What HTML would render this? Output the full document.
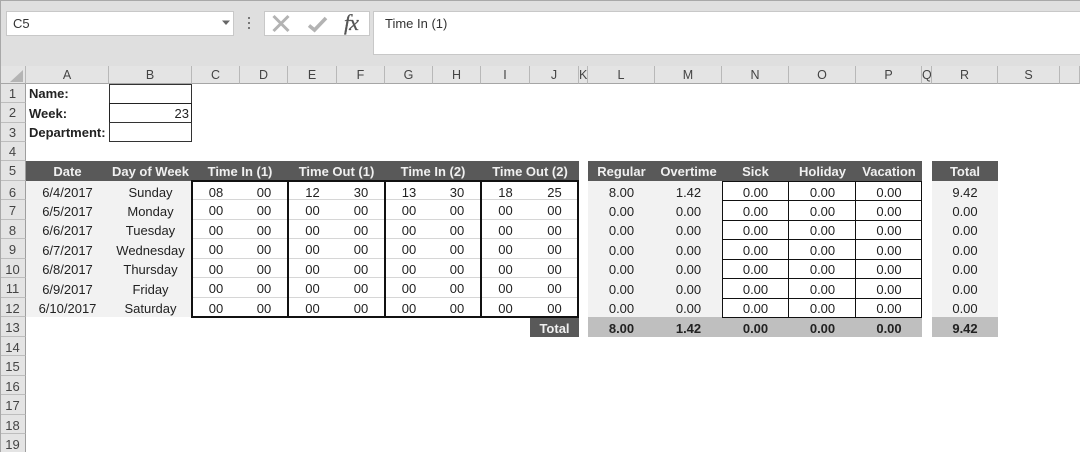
<!DOCTYPE html>
<html><head><meta charset="utf-8"><style>
html,body{margin:0;padding:0;width:1080px;height:452px;overflow:hidden;background:#fff}
body{position:relative;font:13px "Liberation Sans",sans-serif;color:#222;filter:blur(.3px)}
#bar{position:absolute;left:0;top:0;width:1080px;height:66px;background:#dfdfdf;border-top:1px solid #a8a8a8;box-sizing:border-box}
.w{position:absolute;background:#fff;border:1px solid #c8c8c8;box-sizing:border-box}
table{position:absolute;left:0;top:66px;width:1080px;border-collapse:separate;border-spacing:0;table-layout:fixed}
td,th{padding:0;overflow:hidden;white-space:nowrap;text-align:center;font-weight:normal;box-sizing:border-box}
tr:nth-child(n+7) td,tr:nth-child(n+7) th{padding-top:2px}
tr:nth-child(7) td,tr:nth-child(7) th{padding-top:4px;line-height:13px}
tr.c th,tr.c td{background:#e4e4e4;color:#444;font-size:12.5px;border-right:1px solid #b8b8b8;border-bottom:1px solid #a6a6a6}
th.r{background:#e4e4e4;color:#444;border-right:1px solid #9e9e9e;border-bottom:1px solid #bdbdbd}
.l{background:#f2f2f2}
.d{background:#595959;color:#f0f0f0;font-weight:bold}
.g{background:#bfbfbf;font-weight:bold;color:#222}
.t{border-bottom:1px solid #d6d6d6}
.b{font-weight:bold;text-align:left;padding-left:3px;color:#222}
.o{position:absolute;box-sizing:border-box;background:transparent}
.k{border:2px solid #111}
.h{left:722px;width:200px;height:1px;background:#111}
.v{top:181px;height:137px;width:1px;background:#111}
</style></head><body>
<div id="bar"></div>
<div class="w" style="left:6px;top:11px;width:228px;height:25px;padding:4px 0 0 6px;color:#333">C5</div>
<svg style="position:absolute;left:218px;top:15px" width="36" height="18"><path d="M4 5.500h8l-4 4.500z" fill="#666"/><rect x="30" y="2" width="2" height="2" fill="#777"/><rect x="30" y="7" width="2" height="2" fill="#777"/><rect x="30" y="12" width="2" height="2" fill="#777"/></svg>
<div class="w" style="left:264px;top:11px;width:106px;height:25px"></div>
<svg style="position:absolute;left:270px;top:13px" width="62" height="20"><path d="M3.500 3L18.500 18M18.500 3L3.500 18" stroke="#b3b3b3" stroke-width="3" fill="none"/><path d="M39 12.500L44.500 17L56 5" stroke="#b3b3b3" stroke-width="3.600" fill="none"/></svg>
<div style="position:absolute;left:344px;top:10px;font:italic 22px 'Liberation Serif',serif;color:#555;letter-spacing:-1px;-webkit-text-stroke:.3px #555">fx</div>
<div class="w" style="left:373px;top:11px;width:710px;height:44px;padding:4px 0 0 11px;color:#333">Time In (1)</div>
<table><colgroup><col style="width:26px"><col style="width:83px"><col style="width:83px"><col style="width:48px"><col style="width:48px"><col style="width:49px"><col style="width:48px"><col style="width:48px"><col style="width:48px"><col style="width:49px"><col style="width:49px"><col style="width:9px"><col style="width:67px"><col style="width:67px"><col style="width:67px"><col style="width:67px"><col style="width:66px"><col style="width:10px"><col style="width:66px"><col style="width:62px"><col style="width:20px"></colgroup>
<tr class="c" style="height:18px"><th></th><td>A</td><td>B</td><td>C</td><td>D</td><td>E</td><td>F</td><td>G</td><td>H</td><td>I</td><td>J</td><td>K</td><td>L</td><td>M</td><td>N</td><td>O</td><td>P</td><td>Q</td><td>R</td><td>S</td><td></td></tr>
<tr style="height:19px"><th class="r">1</th><td class="b">Name:</td><td colspan="19"></td></tr>
<tr style="height:20px"><th class="r">2</th><td class="b">Week:</td><td style="text-align:right;padding-right:3px;width:83px">23</td><td colspan="18"></td></tr>
<tr style="height:19px"><th class="r">3</th><td class="b">Department:</td><td colspan="19"></td></tr>
<tr style="height:19px"><th class="r">4</th><td colspan="20"></td></tr>
<tr style="height:20px"><th class="r">5</th><td class="d">Date</td><td class="d">Day of Week</td><td class="d" colspan="2">Time In (1)</td><td class="d" colspan="2">Time Out (1)</td><td class="d" colspan="2">Time In (2)</td><td class="d" colspan="2">Time Out (2)</td><td></td><td class="d">Regular</td><td class="d">Overtime</td><td class="d">Sick</td><td class="d">Holiday</td><td class="d">Vacation</td><td></td><td class="d">Total</td><td colspan="2"></td></tr>
<tr style="height:19px"><th class="r">6</th><td class="l">6/4/2017</td><td class="l">Sunday</td><td class="t">08</td><td class="t">00</td><td class="t">12</td><td class="t">30</td><td class="t">13</td><td class="t">30</td><td class="t">18</td><td class="t">25</td><td></td><td class="l">8.00</td><td class="l">1.42</td><td>0.00</td><td>0.00</td><td>0.00</td><td></td><td class="l">9.42</td><td colspan="2"></td></tr>
<tr style="height:20px"><th class="r">7</th><td class="l">6/5/2017</td><td class="l">Monday</td><td class="t">00</td><td class="t">00</td><td class="t">00</td><td class="t">00</td><td class="t">00</td><td class="t">00</td><td class="t">00</td><td class="t">00</td><td></td><td class="l">0.00</td><td class="l">0.00</td><td>0.00</td><td>0.00</td><td>0.00</td><td></td><td class="l">0.00</td><td colspan="2"></td></tr>
<tr style="height:19px"><th class="r">8</th><td class="l">6/6/2017</td><td class="l">Tuesday</td><td class="t">00</td><td class="t">00</td><td class="t">00</td><td class="t">00</td><td class="t">00</td><td class="t">00</td><td class="t">00</td><td class="t">00</td><td></td><td class="l">0.00</td><td class="l">0.00</td><td>0.00</td><td>0.00</td><td>0.00</td><td></td><td class="l">0.00</td><td colspan="2"></td></tr>
<tr style="height:20px"><th class="r">9</th><td class="l">6/7/2017</td><td class="l">Wednesday</td><td class="t">00</td><td class="t">00</td><td class="t">00</td><td class="t">00</td><td class="t">00</td><td class="t">00</td><td class="t">00</td><td class="t">00</td><td></td><td class="l">0.00</td><td class="l">0.00</td><td>0.00</td><td>0.00</td><td>0.00</td><td></td><td class="l">0.00</td><td colspan="2"></td></tr>
<tr style="height:19px"><th class="r">10</th><td class="l">6/8/2017</td><td class="l">Thursday</td><td class="t">00</td><td class="t">00</td><td class="t">00</td><td class="t">00</td><td class="t">00</td><td class="t">00</td><td class="t">00</td><td class="t">00</td><td></td><td class="l">0.00</td><td class="l">0.00</td><td>0.00</td><td>0.00</td><td>0.00</td><td></td><td class="l">0.00</td><td colspan="2"></td></tr>
<tr style="height:20px"><th class="r">11</th><td class="l">6/9/2017</td><td class="l">Friday</td><td class="t">00</td><td class="t">00</td><td class="t">00</td><td class="t">00</td><td class="t">00</td><td class="t">00</td><td class="t">00</td><td class="t">00</td><td></td><td class="l">0.00</td><td class="l">0.00</td><td>0.00</td><td>0.00</td><td>0.00</td><td></td><td class="l">0.00</td><td colspan="2"></td></tr>
<tr style="height:19px"><th class="r">12</th><td class="l">6/10/2017</td><td class="l">Saturday</td><td>00</td><td>00</td><td>00</td><td>00</td><td>00</td><td>00</td><td>00</td><td>00</td><td></td><td class="l">0.00</td><td class="l">0.00</td><td>0.00</td><td>0.00</td><td>0.00</td><td></td><td class="l">0.00</td><td colspan="2"></td></tr>
<tr style="height:20px"><th class="r">13</th><td colspan="9"></td><td class="d">Total</td><td></td><td class="g">8.00</td><td class="g">1.42</td><td class="g">0.00</td><td class="g">0.00</td><td class="g">0.00</td><td></td><td class="g">9.42</td><td colspan="2"></td></tr>
<tr style="height:19px"><th class="r">14</th><td colspan="20"></td></tr>
<tr style="height:20px"><th class="r">15</th><td colspan="20"></td></tr>
<tr style="height:19px"><th class="r">16</th><td colspan="20"></td></tr>
<tr style="height:20px"><th class="r">17</th><td colspan="20"></td></tr>
<tr style="height:19px"><th class="r">18</th><td colspan="20"></td></tr>
<tr style="height:20px"><th class="r">19</th><td colspan="20"></td></tr>
</table>
<div style="position:absolute;left:0;top:0;width:1px;height:452px;background:#a8a8a8"></div>
<svg style="position:absolute;left:9px;top:69px" width="15" height="13"><path d="M14 1V13H1z" fill="#b4b4b4"/></svg>
<div class="o" style="left:109px;top:84px;width:83px;height:20px;border:1px solid #333"></div>
<div class="o" style="left:109px;top:103px;width:83px;height:20px;border:1px solid #222"></div>
<div class="o" style="left:109px;top:122px;width:83px;height:20px;border:1px solid #333"></div>
<div class="o k" style="left:191px;top:180px;width:98px;height:138px"></div>
<div class="o k" style="left:287px;top:180px;width:99px;height:138px"></div>
<div class="o k" style="left:384px;top:180px;width:98px;height:138px"></div>
<div class="o k" style="left:480px;top:180px;width:99px;height:138px"></div>
<div class="o h" style="top:181px"></div><div class="o h" style="top:200px"></div><div class="o h" style="top:220px"></div><div class="o h" style="top:239px"></div><div class="o h" style="top:259px"></div><div class="o h" style="top:278px"></div><div class="o h" style="top:298px"></div><div class="o h" style="top:317px"></div>
<div class="o v" style="left:722px"></div><div class="o v" style="left:788px"></div><div class="o v" style="left:855px"></div><div class="o v" style="left:921px"></div>
</body></html>
